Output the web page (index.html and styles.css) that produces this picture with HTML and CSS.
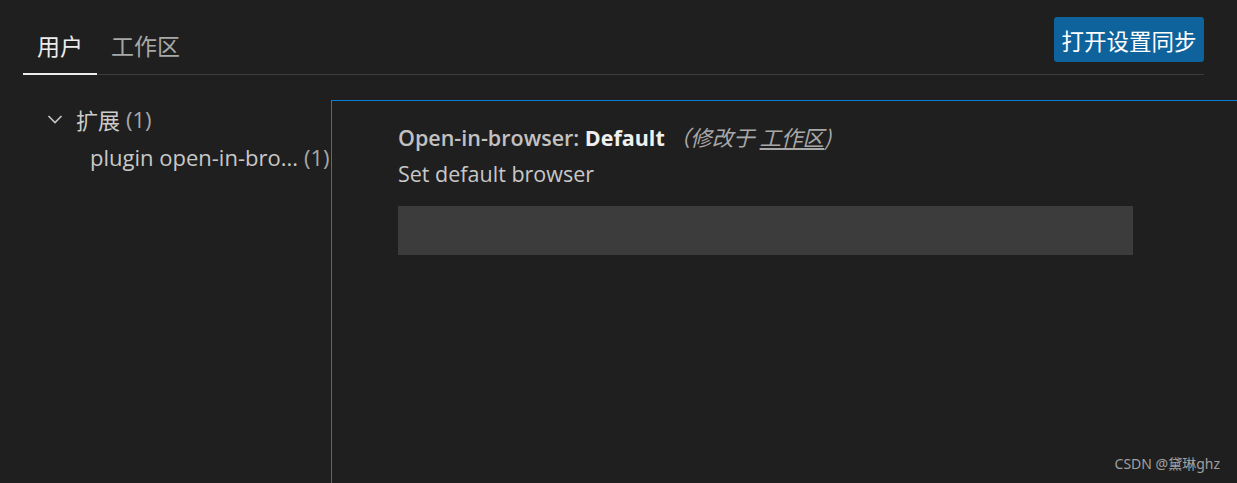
FILE: index.html
```html
<!DOCTYPE html>
<html lang="zh-CN">
<head>
<meta charset="utf-8">
<link rel="stylesheet" href="styles.css">
</head>
<body>
<div class="page">
  <header class="header">
    <nav class="tabs">
      <span class="tab active">用户</span>
      <span class="tab">工作区</span>
    </nav>
    <button class="sync">打开设置同步</button>
  </header>
  <div class="main">
    <aside class="tree">
      <div class="row group">
        <svg class="chev" width="16" height="12" viewBox="0 0 16 12"><path d="M1.5 3 L8 9.5 L14.5 3" fill="none" stroke="#c5c5c5" stroke-width="1.6"/></svg>
        <span class="label">扩展</span><span class="count">(1)</span>
      </div>
      <div class="row item">
        <span class="label">plugin open-in-bro...</span><span class="count">(1)</span>
      </div>
    </aside>
    <section class="panel">
      <div class="setting">
        <div class="title"><span class="cat">Open-in-browser: </span><span class="name">Default</span><span class="mod">（修改于 <span class="link">工作区</span>)</span></div>
        <div class="desc">Set default browser</div>
        <div class="input"></div>
      </div>
    </section>
  </div>
  <div class="watermark">CSDN @黛琳ghz</div>
</div>
</body>
</html>
```

FILE: styles.css
```css
html, body {
  margin: 0;
  padding: 0;
  height: 100%;
  background: #1f1f1f;
  overflow: hidden;
}
.page {
  position: relative;
  height: 483px;
  font-family: "Open Sans", "Noto Sans CJK SC", sans-serif;
  color: #cccccc;
}
.header {
  margin: 0 33px 0 23px;
  height: 74px;
  display: flex;
  justify-content: space-between;
  align-items: flex-start;
  border-bottom: 1px solid #3c3c3c;
  box-sizing: content-box;
}
.tabs {
  display: flex;
  align-self: flex-end;
}
.tab {
  padding: 0 14px;
  height: 74px;
  line-height: 90px;
  font-size: 23px;
  font-family: "Noto Sans CJK SC", sans-serif;
  color: #a8a8a8;
  box-sizing: border-box;
}
.tab.active {
  color: #ececec;
  border-bottom: 2px solid #ececec;
  margin-bottom: -1px;
  height: 75px;
}
.sync {
  margin-top: 17px;
  width: 150px;
  height: 45px;
  border: none;
  border-radius: 3px;
  background: #0e639c;
  color: #ffffff;
  font-family: "Noto Sans CJK SC", sans-serif;
  font-size: 22.5px;
  padding: 0;
}
.main {
  display: flex;
  margin-top: 25px;
  height: 383px;
}
.tree {
  width: 331px;
  flex: none;
  padding-top: 0;
}
.row {
  display: flex;
  align-items: center;
  height: 38px;
  font-size: 22px;
  white-space: nowrap;
}
.group {
  padding-left: 47px;
}
.chev {
  margin-right: 13px;
}
.group .label {
  font-family: "Noto Sans CJK SC", sans-serif;
  font-size: 22px;
}
.count {
  margin-left: 6px;
  color: #a8a8a8;
}
.item {
  padding-left: 90px;
  color: #c8c8c8;
}
.panel {
  flex: 1;
  border-top: 1px solid #0a7fd6;
  border-left: 1px solid #0a7fd6;
  padding: 18px 0 0 66px;
}
.title {
  font-size: 21.5px;
  font-weight: 600;
  line-height: 36px;
  white-space: nowrap;
}
.cat {
  color: #c2c2c2;
}
.name {
  color: #f0f0f0;
  font-weight: 700;
}
.mod {
  margin-left: 4px;
  font-weight: 400;
  font-style: italic;
  color: #a8a8a8;
  font-family: "Noto Sans CJK SC", "Open Sans", sans-serif;
}
.link {
  text-decoration: underline;
}
.desc {
  font-size: 21.5px;
  line-height: 36px;
  color: #c8c8c8;
}
.input {
  margin-top: 14px;
  width: 735px;
  height: 49px;
  background: #3c3c3c;
}
.watermark {
  position: absolute;
  right: 17px;
  bottom: 10px;
  font-size: 14px;
  color: #a0a0a0;
  font-family: "Noto Sans", "Noto Sans CJK SC", sans-serif;
}
```
